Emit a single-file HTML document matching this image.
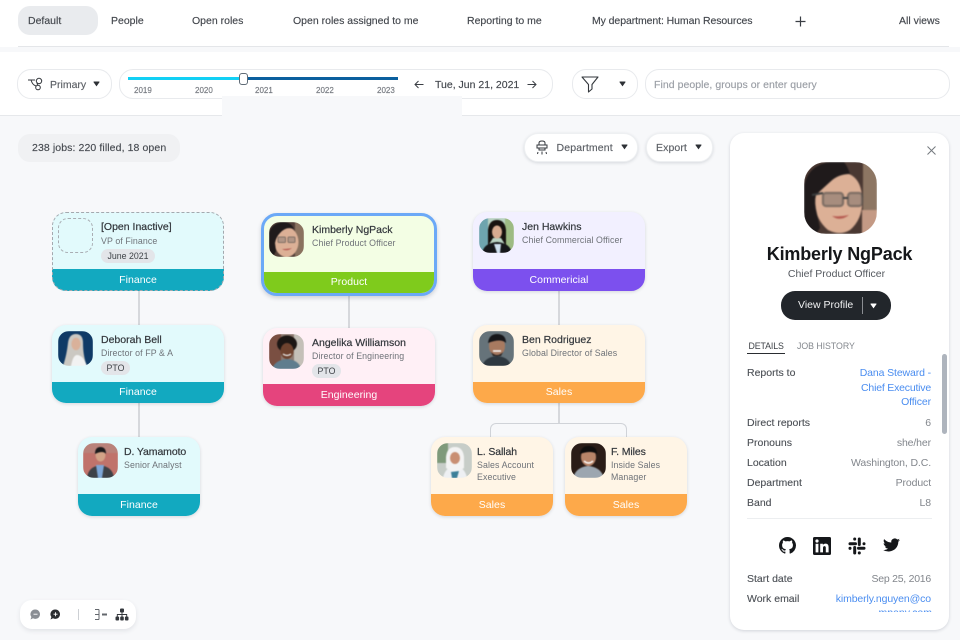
<!DOCTYPE html>
<html><head><meta charset="utf-8">
<style>
*{box-sizing:border-box}
html,body{margin:0;padding:0}
body{width:960px;height:640px;position:relative;overflow:hidden;background:#f7f8fa;font-family:"Liberation Sans",sans-serif;color:#3c4046}
.a,.a *{position:absolute}
.a{position:absolute}
.t{position:absolute;white-space:nowrap;font-size:10.5px;line-height:14px;color:#43474d;-webkit-text-stroke:.15px currentColor}
.btn{position:absolute;background:#fff;border:1px solid #e8eaed;border-radius:14px}
.sh{box-shadow:0 1px 3px rgba(40,50,70,.16);border-color:#eef0f2}
.tri{position:absolute;width:7px;height:6px}
.card{position:absolute;border-radius:14px;overflow:hidden;box-shadow:0 1px 3px rgba(40,50,70,.16)}
.band{position:absolute;left:0;right:0;bottom:0;height:22px;color:#fff;font-size:10.5px;line-height:22px;text-align:center;letter-spacing:.05px}
.nm{position:absolute;white-space:nowrap;font-size:10.5px;line-height:14px;color:#33373c;-webkit-text-stroke:.2px currentColor}
.ti{position:absolute;white-space:nowrap;font-size:8.8px;line-height:12px;color:#6e7278;letter-spacing:.1px}
.tag{position:absolute;background:#e3e5e9;border-radius:7px;height:14px;font-size:8.8px;line-height:14px;text-align:center;color:#3f4348}
.av{position:absolute;width:35px;height:35px;border-radius:11px;overflow:hidden}
.av svg{display:block;width:35px;height:35px;filter:blur(.45px)}
.l{position:absolute;background:#d6d8dc}
.k{position:absolute;left:17px;font-size:10.5px;line-height:14px;color:#4c5056;white-space:nowrap;-webkit-text-stroke:.12px currentColor}
.v{position:absolute;right:18px;font-size:10.5px;line-height:14px;color:#82868c;white-space:nowrap;text-align:right;letter-spacing:-.12px}
.lnk{color:#4a8df0}
</style></head>
<body>
<!-- top tabs -->
<div class="a" style="left:0;top:0;width:960px;height:47px;background:#fff"></div>
<div class="a" style="left:18px;top:6px;width:80px;height:29px;background:#e9ebee;border-radius:12px"></div>
<div class="t" style="left:28px;top:13.5px;color:#44484e">Default</div>
<div class="t" style="left:111px;top:13.5px">People</div>
<div class="t" style="left:192px;top:13.5px">Open roles</div>
<div class="t" style="left:293px;top:13.5px">Open roles assigned to me</div>
<div class="t" style="left:467px;top:13.5px">Reporting to me</div>
<div class="t" style="left:592px;top:13.5px;letter-spacing:-.08px">My department: Human Resources</div>
<svg class="a" style="left:795px;top:15.5px" width="11" height="11" viewBox="0 0 11 11"><path d="M5.5 0.5V10.5M0.5 5.5H10.5" stroke="#3a3e44" stroke-width="1.2"/></svg>
<div class="t" style="left:899px;top:13.5px">All views</div>
<div class="a" style="left:18px;top:46px;width:931px;height:1px;background:#e4e6e9"></div>

<!-- toolbar -->
<div class="a" style="left:0;top:52px;width:960px;height:64px;background:#fff;border-bottom:1px solid #e6e8eb"></div>
<div class="btn" style="left:17px;top:69px;width:95px;height:30px"></div>
<svg class="a" style="left:27px;top:77px" width="17" height="14" viewBox="0 0 17 14" fill="none" stroke="#33373c" stroke-width="1"><path d="M1 3H8M4 3C5 6 6 8 9 9"/><circle cx="12" cy="4" r="2.7"/><circle cx="11" cy="10.5" r="2.3"/><path d="M10 5.5L10.5 8.3"/></svg>
<div class="t" style="left:50px;top:77.5px;color:#5b5f65">Primary</div>
<svg class="tri" style="left:93px;top:81px" viewBox="0 0 9 7"><path d="M0.5 1Q0.5 0.3 1.5 0.3H7.5Q8.5 0.3 8.5 1L4.5 6.5Z" fill="#2d3136"/></svg>

<div class="btn" style="left:119px;top:69px;width:434px;height:30px"></div>
<div class="a" style="left:128px;top:77px;width:115px;height:3px;background:#12d0f5"></div>
<div class="a" style="left:243px;top:77px;width:155px;height:3px;background:#0a5f9e"></div>
<div class="a" style="left:239px;top:73px;width:9px;height:12px;background:#fff;border:1.5px solid #5f6b76;border-radius:3px"></div>
<div class="t" style="left:134px;top:84px;font-size:8px;color:#767a80">2019</div>
<div class="t" style="left:195px;top:84px;font-size:8px;color:#767a80">2020</div>
<div class="t" style="left:255px;top:84px;font-size:8px;color:#767a80">2021</div>
<div class="t" style="left:316px;top:84px;font-size:8px;color:#767a80">2022</div>
<div class="t" style="left:377px;top:84px;font-size:8px;color:#767a80">2023</div>
<svg class="a" style="left:414px;top:80px" width="10" height="9" viewBox="0 0 10 9" fill="none" stroke="#3a3e44" stroke-width="1"><path d="M9.5 4.5H1M4.5 1L1 4.5L4.5 8"/></svg>
<div class="t" style="left:435px;top:77.5px">Tue, Jun 21, 2021</div>
<svg class="a" style="left:527px;top:80px" width="10" height="9" viewBox="0 0 10 9" fill="none" stroke="#3a3e44" stroke-width="1"><path d="M0.5 4.5H9M5.5 1L9 4.5L5.5 8"/></svg>
<div class="a" style="left:222px;top:96px;width:240px;height:20px;background:#f7f8fa"></div>

<div class="btn" style="left:572px;top:69px;width:66px;height:30px"></div>
<svg class="a" style="left:581px;top:76px" width="18" height="17" viewBox="0 0 18 17" fill="none" stroke="#33373c" stroke-width="1.1"><path d="M1 1H17L11 8.5V13L7.5 16V8.5Z" stroke-linejoin="round"/></svg>
<svg class="tri" style="left:619px;top:81px" viewBox="0 0 9 7"><path d="M0.5 1Q0.5 0.3 1.5 0.3H7.5Q8.5 0.3 8.5 1L4.5 6.5Z" fill="#2d3136"/></svg>
<div class="btn" style="left:645px;top:69px;width:305px;height:30px"></div>
<div class="t" style="left:654px;top:77.5px;color:#9a9ea5;letter-spacing:.05px">Find people, groups or enter query</div>

<!-- sub bar -->
<div class="a" style="left:18px;top:134px;width:162px;height:28px;background:#f0f1f3;border-radius:12px"></div>
<div class="t" style="left:32px;top:140.5px;color:#464a50;letter-spacing:.1px">238 jobs: 220 filled, 18 open</div>
<div class="btn sh" style="left:524px;top:133px;width:114px;height:29px"></div>
<svg class="a" style="left:535px;top:140px" width="14" height="15" viewBox="0 0 14 15" fill="none" stroke="#33373c" stroke-width="1"><path d="M4 5V3Q4 1 7 1Q10 1 10 3V5"/><path d="M2 5H12V8H2Z"/><path d="M4 8V10H10V8"/><path d="M3 12L2.5 14M7 11.5V14.5M11 12L11.5 14"/></svg>
<div class="t" style="left:556.5px;top:140.5px;color:#5b5f65;letter-spacing:.15px">Department</div>
<svg class="tri" style="left:621px;top:144px" viewBox="0 0 9 7"><path d="M0.5 1Q0.5 0.3 1.5 0.3H7.5Q8.5 0.3 8.5 1L4.5 6.5Z" fill="#2d3136"/></svg>
<div class="btn sh" style="left:646px;top:133px;width:67px;height:29px"></div>
<div class="t" style="left:656px;top:140.5px;color:#5b5f65;letter-spacing:.1px">Export</div>
<svg class="tri" style="left:695px;top:144px" viewBox="0 0 9 7"><path d="M0.5 1Q0.5 0.3 1.5 0.3H7.5Q8.5 0.3 8.5 1L4.5 6.5Z" fill="#2d3136"/></svg>

<!-- connectors -->
<div class="l" style="left:137.5px;top:291px;width:2px;height:34px"></div>
<div class="l" style="left:137.5px;top:403px;width:2px;height:34px"></div>
<div class="l" style="left:348px;top:295px;width:2px;height:33px"></div>
<div class="l" style="left:558px;top:291px;width:2px;height:34px"></div>
<div class="l" style="left:558px;top:403px;width:2px;height:20px"></div>
<div class="a" style="left:490px;top:423px;width:137px;height:16px;border:1.5px solid #d0d3d8;border-bottom:0;border-radius:6px 6px 0 0"></div>

<!-- Open inactive -->
<div class="card" style="left:52px;top:212px;width:172px;height:79px;background:#e2fafc;box-shadow:none;border-radius:14px">
  <div class="band" style="background:#12a9c0">Finance</div>
</div>
<div class="a" style="left:52px;top:212px;width:172px;height:79px;border:1px dashed #a4a8ae;border-radius:14px"></div>
<div class="a" style="left:58px;top:218px;width:35px;height:35px;border:1px dashed #a9adb3;border-radius:10px"></div>
<div class="nm" style="left:101px;top:220px;">[Open Inactive]</div>
<div class="ti" style="left:101px;top:234.5px">VP of Finance</div>
<div class="tag" style="left:101px;top:249px;width:54px">June 2021</div>

<!-- Deborah -->
<div class="card" style="left:52px;top:325px;width:172px;height:78px;background:#e2fafc"><div class="band" style="background:#12a9c0;height:21px;line-height:21px">Finance</div></div>
<div class="av" style="left:58px;top:331px"><svg viewBox="0 0 35 35"><rect width="35" height="35" fill="#0f3a66"/><path d="M5 35C8 26 9 20 10 12Q11 3 18 3Q25 3 25 12C25 20 26 26 28 33L22 35Z" fill="#cbc8c2"/><ellipse cx="18" cy="13" rx="4.6" ry="6.2" fill="#d9b19a"/><path d="M13 35Q15 24 19 24Q25 24 29 35Z" fill="#f2f2f2"/></svg></div>
<div class="nm" style="left:101px;top:332.5px">Deborah Bell</div>
<div class="ti" style="left:101px;top:346.5px">Director of FP &amp; A</div>
<div class="tag" style="left:101px;top:361px;width:29px">PTO</div>

<!-- D Yamamoto -->
<div class="card" style="left:78px;top:437px;width:122px;height:79px;background:#e2fafc"><div class="band" style="background:#12a9c0">Finance</div></div>
<div class="av" style="left:83px;top:443px"><svg viewBox="0 0 35 35"><rect width="35" height="35" fill="#c0736b"/><rect y="0" width="35" height="10" fill="#b9827a"/><path d="M4 35Q5 24 17 22Q30 24 31 35Z" fill="#3d4147"/><path d="M13 22H21L19 35H15Z" fill="#7ea6d6"/><ellipse cx="17.5" cy="12" rx="5" ry="6.5" fill="#d3a387"/><path d="M12 11Q12 4 17.5 4Q23 4 23 11Q20 7 12 11Z" fill="#1c1a1c"/></svg></div>
<div class="nm" style="left:124px;top:445px;letter-spacing:-.1px">D. Yamamoto</div>
<div class="ti" style="left:124px;top:459px">Senior Analyst</div>

<!-- Kimberly -->
<div class="card" style="left:261px;top:213px;width:176px;height:83px;background:#f3fee4;border:3px solid #6ba9f7;border-radius:16px;box-shadow:0 2px 4px rgba(40,50,70,.2)"><div class="band" style="background:#7fcb1c;height:21px;line-height:21px">Product</div></div>
<div class="av" style="left:269px;top:222px"><svg viewBox="0 0 35 35"><rect width="35" height="35" fill="#54403a"/><rect x="26" width="9" height="35" fill="#8a725f"/><ellipse cx="17.5" cy="20" rx="12" ry="15" fill="#dcb096"/><path d="M0 35V11Q3 1 14 0Q22 0 25 7Q17 4 11 11Q7 15 6 21L7 29L4 35Z" fill="#1f1a1b"/><rect x="9" y="15" width="7.5" height="5.5" rx="1" fill="#8e8079" opacity=".55" stroke="#3a3d3e" stroke-width="1"/><rect x="19" y="15" width="7" height="5.5" rx="1" fill="#8e8079" opacity=".55" stroke="#3a3d3e" stroke-width="1"/><path d="M13 27Q18 30 23 26Q19 27 13 27Z" fill="#b5584f"/></svg></div>
<div class="nm" style="left:312px;top:223px">Kimberly NgPack</div>
<div class="ti" style="left:312px;top:237px">Chief Product Officer</div>

<!-- Angelika -->
<div class="card" style="left:263px;top:328px;width:172px;height:78px;background:#fff0f6"><div class="band" style="background:#e5447d">Engineering</div></div>
<div class="av" style="left:269px;top:334px"><svg viewBox="0 0 35 35"><rect width="35" height="35" fill="#8d7a70"/><rect width="12" height="35" fill="#7a4f42"/><rect x="25" width="10" height="35" fill="#c4c0b8"/><path d="M3 35Q6 26 18 25Q30 26 32 35Z" fill="#5f7d8e"/><ellipse cx="18" cy="10" rx="10" ry="8.5" fill="#1c1614"/><ellipse cx="18" cy="17" rx="6.5" ry="8" fill="#6f432f"/><path d="M14 20Q18 23 22 20" stroke="#eee" stroke-width="1.2" fill="none"/></svg></div>
<div class="nm" style="left:312px;top:335.5px">Angelika Williamson</div>
<div class="ti" style="left:312px;top:349.5px">Director of Engineering</div>
<div class="tag" style="left:312px;top:364px;width:29px">PTO</div>

<!-- Jen -->
<div class="card" style="left:473px;top:212px;width:172px;height:79px;background:#f2f0ff"><div class="band" style="background:#7c50ee">Commericial</div></div>
<div class="av" style="left:479px;top:218px"><svg viewBox="0 0 35 35"><rect width="35" height="35" fill="#b9d2c2"/><rect width="9" height="35" fill="#6ea4ae"/><rect x="26" width="9" height="35" fill="#9dbb83"/><path d="M3 35Q5 25 18 24Q31 25 33 35Z" fill="#16171a"/><path d="M9 28V12Q10 2 18 2Q26 2 27 12V28L22 20H14Z" fill="#17120f"/><ellipse cx="18" cy="14" rx="5" ry="6.5" fill="#d7ab90"/><path d="M15 26L18 35H21L22 26Z" fill="#cfe0ef"/></svg></div>
<div class="nm" style="left:522px;top:220px">Jen Hawkins</div>
<div class="ti" style="left:522px;top:234px">Chief Commercial Officer</div>

<!-- Ben -->
<div class="card" style="left:473px;top:325px;width:172px;height:78px;background:#fff5e6"><div class="band" style="background:#fda94a;height:21px;line-height:21px">Sales</div></div>
<div class="av" style="left:479px;top:331px"><svg viewBox="0 0 35 35"><rect width="35" height="35" fill="#66737a"/><path d="M3 35Q6 26 18 25Q30 26 32 35Z" fill="#2e3840"/><ellipse cx="18" cy="15" rx="8" ry="10" fill="#a87a60"/><path d="M9 12Q10 3 18 3Q27 3 27 12Q22 7 9 12Z" fill="#17171a"/><path d="M12 21Q18 27 24 21L22 25H14Z" fill="#2a2320"/><path d="M14 20H22" stroke="#fff" stroke-width="1.5"/></svg></div>
<div class="nm" style="left:522px;top:332.5px">Ben Rodriguez</div>
<div class="ti" style="left:522px;top:346.5px">Global Director of Sales</div>

<!-- Sallah -->
<div class="card" style="left:431px;top:437px;width:122px;height:79px;background:#fff5e6"><div class="band" style="background:#fda94a">Sales</div></div>
<div class="av" style="left:437px;top:443px"><svg viewBox="0 0 35 35"><rect width="35" height="35" fill="#c7cdc8"/><rect width="11" height="20" fill="#7f9a7b"/><path d="M6 35Q8 24 18 23Q28 24 30 35Z" fill="#eef0f3"/><path d="M9 25V14Q10 4 18 4Q26 4 27 14V25Q18 32 9 25Z" fill="#f3f3f3"/><ellipse cx="18" cy="15" rx="5" ry="6" fill="#c98f73"/><path d="M14 29L22 28L20 35H15Z" fill="#3c7f99"/></svg></div>
<div class="nm" style="left:477px;top:445px;letter-spacing:-.1px">L. Sallah</div>
<div class="ti" style="left:477px;top:459px">Sales Account</div>
<div class="ti" style="left:477px;top:471px">Executive</div>

<!-- Miles -->
<div class="card" style="left:565px;top:437px;width:122px;height:79px;background:#fff5e6"><div class="band" style="background:#fda94a">Sales</div></div>
<div class="av" style="left:571px;top:443px"><svg viewBox="0 0 35 35"><rect width="35" height="35" fill="#2a1c17"/><path d="M2 35Q5 24 17 23Q30 24 33 35Z" fill="#9ca6b0"/><ellipse cx="17.5" cy="14" rx="7.5" ry="9" fill="#b88468"/><path d="M9 11Q10 3 17.5 3Q26 3 26 11Q20 7 9 11Z" fill="#0f0d0d"/><path d="M13 18Q17.5 22 22 18" stroke="#fff" stroke-width="1.5" fill="none"/></svg></div>
<div class="nm" style="left:611px;top:445px;letter-spacing:-.1px">F. Miles</div>
<div class="ti" style="left:611px;top:459px">Inside Sales</div>
<div class="ti" style="left:611px;top:471px">Manager</div>

<!-- bottom toolbar -->
<div class="a" style="left:20px;top:600px;width:116px;height:29px;background:#fff;border-radius:12px;box-shadow:0 2px 5px rgba(40,50,70,.1)"></div>
<svg class="a" style="left:30px;top:609px" width="11" height="11" viewBox="0 0 11 11"><path d="M5.5 0.5A4.7 4.7 0 1 1 3 9.3L0.5 10.5L1.4 8A4.7 4.7 0 0 1 5.5 0.5Z" fill="#8a8e94"/><path d="M3.5 5.2H7.5" stroke="#fff" stroke-width=".9"/></svg>
<svg class="a" style="left:50px;top:609px" width="11" height="11" viewBox="0 0 11 11"><path d="M5.5 0.5A4.7 4.7 0 1 1 3 9.3L0.5 10.5L1.4 8A4.7 4.7 0 0 1 5.5 0.5Z" fill="#2a2d31"/><path d="M3.5 5.2H7.5M5.5 3.2V7.2" stroke="#fff" stroke-width=".9"/></svg>
<div class="a" style="left:78px;top:609px;width:1px;height:11px;background:#cdd0d4"></div>
<svg class="a" style="left:94px;top:608px" width="14" height="13" viewBox="0 0 14 13" fill="none" stroke="#63676d" stroke-width="1"><path d="M1 1.5H5M1 6.5H5M1 11.5H5M5 1.5V11.5"/><path d="M8 6.5H13" stroke-width="2"/></svg>
<svg class="a" style="left:115px;top:608px" width="14" height="13" viewBox="0 0 14 13" fill="#33373c"><rect x="5" y="0.5" width="4" height="4" rx="1"/><rect x="0.5" y="8.5" width="3.6" height="4" rx="1"/><rect x="5.2" y="8.5" width="3.6" height="4" rx="1"/><rect x="9.9" y="8.5" width="3.6" height="4" rx="1"/><path d="M7 4V8.5M2.3 8.5V6.5H11.7V8.5" fill="none" stroke="#33373c" stroke-width=".9"/></svg>

<!-- right panel -->
<div class="a" style="left:730px;top:133px;width:219px;height:497px;background:#fff;border-radius:14px;box-shadow:0 1px 3px rgba(40,50,70,.18)">
  <svg style="left:197px;top:13px" width="9" height="9" viewBox="0 0 9 9"><path d="M.5 .5L8.5 8.5M8.5 .5L.5 8.5" stroke="#74787e" stroke-width="1"/></svg>
  <div style="left:74px;top:29px;width:73px;height:72px;border-radius:22px;overflow:hidden">
    <svg viewBox="0 0 73 72" width="73" height="72" style="left:0;top:0;filter:blur(.8px)"><rect width="73" height="72" fill="#4a3832"/><rect x="59" width="14" height="72" fill="#8d7663"/><rect x="58" y="48" width="15" height="24" fill="#c49a85"/><path d="M10 40Q10 12 34 10Q56 10 58 34Q60 56 46 68Q36 74 24 68Q12 58 10 40Z" fill="#dcb096"/><path d="M0 72V24Q4 3 26 0H40Q44 5 46 12Q34 12 26 20Q16 29 12 33Q10 40 13 52L16 66L12 72Z" fill="#1f1a1b"/><path d="M8 33L19 31" stroke="#3a3d3e" stroke-width="2"/><rect x="19" y="31" width="20" height="13" rx="3" fill="#84776f" opacity=".6" stroke="#3f4142" stroke-width="2.2"/><rect x="44" y="31" width="14" height="13" rx="3" fill="#84776f" opacity=".6" stroke="#3f4142" stroke-width="2.2"/><path d="M39 36H44" stroke="#3f4142" stroke-width="2"/><path d="M28 54Q36 60 45 53Q36 55 28 54Z" fill="#b5584f"/></svg>
  </div>
  <div style="left:0;width:219px;top:110px;text-align:center;font-size:18px;line-height:22px;font-weight:700;color:#15171a;white-space:nowrap;letter-spacing:-.17px">Kimberly NgPack</div>
  <div style="left:0;width:213px;top:134px;text-align:center;font-size:10.5px;line-height:14px;color:#55595f;white-space:nowrap">Chief Product Officer</div>
  <div style="left:51px;top:158px;width:110px;height:29px;background:#22262b;border-radius:14px"></div>
  <div style="left:68px;top:165px;font-size:10.5px;line-height:14px;color:#f2f3f4;white-space:nowrap">View Profile</div>
  <div style="left:132px;top:164px;width:1px;height:17px;background:#8a8d92"></div>
  <svg style="left:140px;top:169.5px" width="7" height="6" viewBox="0 0 9 7"><path d="M0.5 1Q0.5 0.3 1.5 0.3H7.5Q8.5 0.3 8.5 1L4.5 6.5Z" fill="#fff"/></svg>
  <div style="left:18.5px;top:206.5px;font-size:8.8px;line-height:12px;color:#3f4348;white-space:nowrap;letter-spacing:-.1px">DETAILS</div>
  <div style="left:17px;top:220px;width:38px;height:1px;background:#2a2d31"></div>
  <div style="left:67px;top:206.5px;font-size:8.8px;line-height:12px;color:#84888e;white-space:nowrap;letter-spacing:-.05px">JOB HISTORY</div>
  <div style="left:212px;top:221px;width:5px;height:80px;background:#aeb4bd;border-radius:3px"></div>

  <div class="k" style="top:233px">Reports to</div>
  <div class="v lnk" style="top:233px">Dana Steward -</div>
  <div class="v lnk" style="top:248px;letter-spacing:-.2px">Chief Executive</div>
  <div class="v lnk" style="top:262px">Officer</div>
  <div class="k" style="top:282.5px">Direct reports</div><div class="v" style="top:282.5px">6</div>
  <div class="k" style="top:302.5px">Pronouns</div><div class="v" style="top:302.5px">she/her</div>
  <div class="k" style="top:322.5px">Location</div><div class="v" style="top:322.5px">Washington, D.C.</div>
  <div class="k" style="top:342.5px">Department</div><div class="v" style="top:342.5px">Product</div>
  <div class="k" style="top:362.5px">Band</div><div class="v" style="top:362.5px">L8</div>
  <div style="left:17px;top:385px;width:185px;height:1px;background:#eceef0"></div>

  <svg style="left:49px;top:404px" width="17" height="17" viewBox="0 0 16 16"><path fill="#15171a" d="M8 0C3.58 0 0 3.58 0 8c0 3.54 2.29 6.53 5.47 7.59.4.07.55-.17.55-.38 0-.19-.01-.82-.01-1.49-2.01.37-2.53-.49-2.69-.94-.09-.23-.48-.94-.82-1.13-.28-.15-.68-.52-.01-.53.63-.01 1.08.58 1.23.82.72 1.21 1.87.87 2.33.66.07-.52.28-.87.51-1.07-1.78-.2-3.64-.89-3.64-3.95 0-.87.31-1.59.82-2.15-.08-.2-.36-1.02.08-2.12 0 0 .67-.21 2.2.82.64-.18 1.32-.27 2-.27s1.36.09 2 .27c1.53-1.04 2.2-.82 2.2-.82.44 1.1.16 1.92.08 2.12.51.56.82 1.27.82 2.15 0 3.07-1.87 3.75-3.65 3.95.29.25.54.73.54 1.48 0 1.07-.01 1.93-.01 2.2 0 .21.15.46.55.38A8.01 8.01 0 0 0 16 8c0-4.42-3.58-8-8-8z"/></svg>
  <svg style="left:83px;top:403.5px" width="18" height="18" viewBox="0 0 18 18"><rect width="18" height="18" rx="1.5" fill="#15171a"/><rect x="2.6" y="6.8" width="2.8" height="8.6" fill="#fff"/><circle cx="4" cy="4" r="1.6" fill="#fff"/><path d="M7.2 6.8H9.9V8C10.4 7.1 11.4 6.6 12.6 6.6C14.8 6.6 15.6 8 15.6 10.3V15.4H12.8V10.9C12.8 9.8 12.4 9.1 11.5 9.1C10.5 9.1 10 9.8 10 10.9V15.4H7.2Z" fill="#fff"/></svg>
  <svg style="left:118px;top:403.5px" width="18" height="18" viewBox="0 0 18 18" fill="none" stroke="#15171a" stroke-width="3" stroke-linecap="round"><path d="M2 6.7H7.5M6.7 2V2.1M11.3 2V7.5M16 6.7V6.8M16 11.3H10.5M11.3 16V15.9M6.7 16V10.5M2 11.3V11.4"/></svg>
  <svg style="left:153px;top:404px" width="17" height="16" viewBox="0 0 24 24" preserveAspectRatio="none"><path fill="#15171a" d="M23.95 4.57a10 10 0 0 1-2.82.77 4.96 4.96 0 0 0 2.16-2.72c-.95.55-2 .96-3.12 1.19a4.92 4.92 0 0 0-8.38 4.48C7.69 8.1 4.07 6.13 1.64 3.16a4.82 4.82 0 0 0-.67 2.48c0 1.71.87 3.21 2.19 4.1a4.9 4.9 0 0 1-2.23-.62v.06a4.92 4.92 0 0 0 3.95 4.83 4.99 4.99 0 0 1-2.21.08 4.93 4.93 0 0 0 4.6 3.42A9.87 9.87 0 0 1 0 19.54a14 14 0 0 0 7.56 2.21c9.05 0 14-7.5 14-13.98 0-.21 0-.42-.02-.63a9.94 9.94 0 0 0 2.46-2.55z"/></svg>

  <div class="k" style="top:438.5px">Start date</div><div class="v" style="top:438.5px;letter-spacing:-.25px">Sep 25, 2016</div>
  <div class="k" style="top:458.5px">Work email</div><div class="v lnk" style="top:458.5px">kimberly.nguyen@co</div>
  <div style="left:148px;top:476px;width:54px;height:3px;overflow:hidden"><div class="lnk" style="right:0;top:-3px;font-size:10.5px;line-height:14px;white-space:nowrap">mpany.com</div></div>
</div>
</body></html>
